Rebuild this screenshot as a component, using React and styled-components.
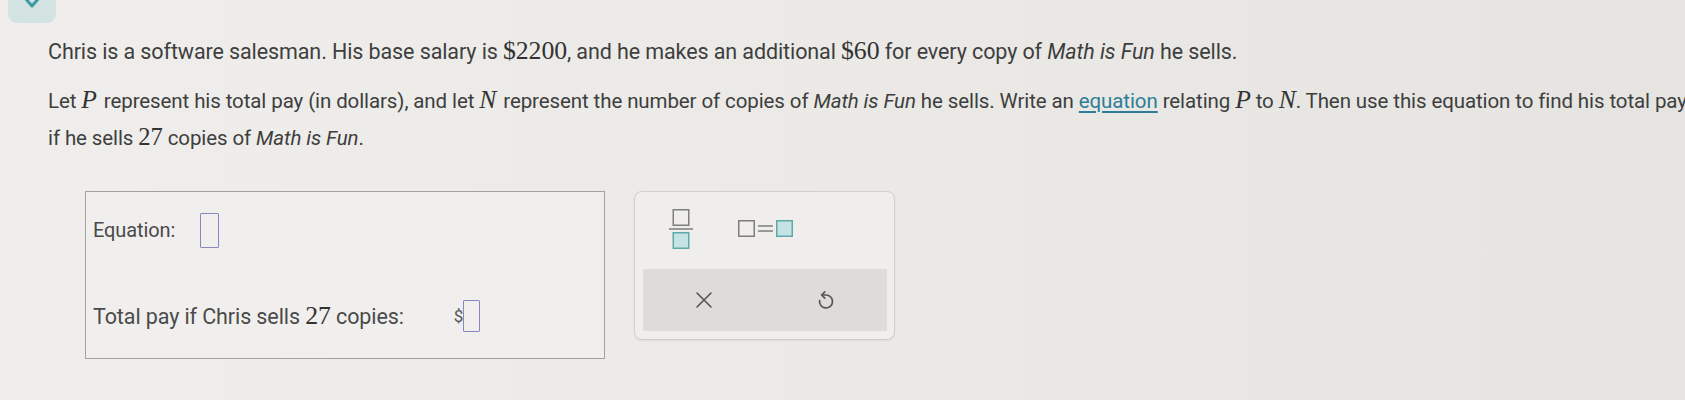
import React from "react";
import styled, { createGlobalStyle } from "styled-components";

const Global = createGlobalStyle`
  html, body { margin: 0; padding: 0; }
  body {
    width: 1685px;
    height: 400px;
    overflow: hidden;
    background: linear-gradient(90deg, #efeeec 0%, #ebeae7 45%, #e5e4e0 100%);
    font-family: Roboto, "Noto Sans", "Liberation Sans", sans-serif;
    color: #3e3e3e;
  }
`;

const Page = styled.div`
  display: flex;
  flex-direction: column;
`;

const Header = styled.div`
  height: 23px;
  padding-left: 8px;
  display: flex;
`;

const TabButton = styled.div`
  width: 48px;
  height: 23px;
  border-radius: 0 0 9px 9px;
  background: #d3e3e2;
  display: flex;
  justify-content: center;
  align-items: flex-start;
  overflow: hidden;
`;

const Content = styled.div`
  padding: 10px 0 0 48px;
  display: flex;
  flex-direction: column;
`;

const Para = styled.p`
  margin: ${(p) => (p.$first ? "0" : "13px 0 0")};
  font-size: ${(p) => p.$size}px;
  line-height: 35px;
  letter-spacing: -0.1px;
  white-space: nowrap;
`;

const MathNum = styled.span`
  font-family: "Liberation Serif", "DejaVu Serif", serif;
  font-size: 1.2em;
  color: #333;
`;

const MathVar = styled.span`
  font-family: "Liberation Serif", "DejaVu Serif", serif;
  font-style: italic;
  font-size: 1.25em;
  color: #333;
  margin-right: ${(p) => p.$mr || "0"};
`;

const Title = styled.i`
  font-style: italic;
`;

const Link = styled.span`
  color: #2f7d98;
  text-decoration: underline;
  text-underline-offset: 3px;
`;

const WorkArea = styled.div`
  margin: 35px 0 0 37px;
  display: flex;
  align-items: flex-start;
  gap: 29px;
`;

const AnswerBox = styled.div`
  box-sizing: border-box;
  width: 520px;
  height: 168px;
  border: 1px solid #a2a2a0;
  background: #f0efed;
  padding: 20px 7px 0;
  display: flex;
  flex-direction: column;
  gap: 50px;
`;

const AnswerRow = styled.div`
  display: flex;
  align-items: center;
  height: 36px;
  font-size: ${(p) => p.$size}px;
  letter-spacing: -0.1px;
  color: #4a4a4a;
`;

const Dollar = styled.span`
  margin-left: 50px;
  font-size: 17px;
  color: #555;
`;

const InputSlot = styled.span`
  box-sizing: border-box;
  display: inline-block;
  width: ${(p) => p.$w || 19}px;
  height: ${(p) => p.$h || 34}px;
  border: 1.5px solid #8a86c0;
  border-radius: 1px;
  margin-left: ${(p) => p.$ml || 0}px;
`;

const Keypad = styled.div`
  box-sizing: border-box;
  width: 261px;
  height: 149px;
  border: 1px solid #cfcfcd;
  border-radius: 8px;
  background: #efeeec;
  box-shadow: 0 1px 2px rgba(0, 0, 0, 0.06);
  display: flex;
  flex-direction: column;
`;

const KeyRow = styled.div`
  box-sizing: border-box;
  height: 78px;
  padding: 0 0 4px 4px;
  display: grid;
  grid-template-columns: 84px 84px 84px;
  align-items: center;
`;

const KeyCell = styled.div`
  display: flex;
  justify-content: center;
  align-items: center;
`;

const ActionBar = styled.div`
  margin: 0 7px 8px 8px;
  height: 62px;
  background: #dddcda;
  border-radius: 2px;
  display: grid;
  grid-template-columns: 1fr 1fr;
  align-items: center;
`;

const ActionButton = styled.div`
  display: flex;
  justify-content: center;
  align-items: center;
`;

const Chevron = () => (
  <svg width="20" height="12" viewBox="0 0 20 12">
    <path d="M3 -2 L10 6 L17 -2" fill="none" stroke="#3d9ba6" strokeWidth="3" strokeLinecap="round" strokeLinejoin="round" />
  </svg>
);

const FractionIcon = () => (
  <svg width="26" height="42" viewBox="0 0 26 42">
    <rect x="5.25" y="1.75" width="15.5" height="15.5" fill="none" stroke="#7e7e7e" strokeWidth="1.5" />
    <line x1="1" y1="21" x2="25" y2="21" stroke="#7e7e7e" strokeWidth="1.5" />
    <rect x="5.25" y="24.75" width="15.5" height="15.5" fill="#c3e4e3" stroke="#5fa9aa" strokeWidth="1.5" />
  </svg>
);

const EqualsIcon = () => (
  <svg width="57" height="19" viewBox="0 0 57 19">
    <rect x="1.75" y="1.75" width="15.5" height="15.5" fill="none" stroke="#7e7e7e" strokeWidth="1.5" />
    <line x1="21" y1="7" x2="36" y2="7" stroke="#7e7e7e" strokeWidth="1.5" />
    <line x1="21" y1="12" x2="36" y2="12" stroke="#7e7e7e" strokeWidth="1.5" />
    <rect x="39.75" y="1.75" width="15.5" height="15.5" fill="#c3e4e3" stroke="#5fa9aa" strokeWidth="1.5" />
  </svg>
);

const CrossIcon = () => (
  <svg width="18" height="18" viewBox="0 0 18 18">
    <path d="M2 2 L16 16 M16 2 L2 16" stroke="#555" strokeWidth="1.6" strokeLinecap="round" />
  </svg>
);

const UndoIcon = () => (
  <svg width="20" height="22" viewBox="0 0 20 22">
    <path d="M6 6 H10 A6.5 6.5 0 1 1 3.6 11.5" fill="none" stroke="#555" strokeWidth="1.7" strokeLinecap="round" />
    <path d="M8.8 2.8 L5.6 6 L8.8 9.2" fill="none" stroke="#555" strokeWidth="1.7" strokeLinecap="round" strokeLinejoin="round" />
  </svg>
);

export default function App() {
  return (
    <>
      <Global />
      <Page>
        <Header>
          <TabButton>
            <Chevron />
          </TabButton>
        </Header>
        <Content>
          <Para $first $size={21.5}>
            Chris is a software salesman. His base salary is <MathNum>$2200</MathNum>, and he makes an additional{" "}
            <MathNum>$60</MathNum> for every copy of <Title>Math is Fun</Title> he sells.
          </Para>
          <Para $size={20.5}>
            Let <MathVar $mr="2px">P</MathVar> represent his total pay (in dollars), and let <MathVar $mr="2px">N</MathVar>{" "}
            represent the number of copies of <Title>Math is Fun</Title> he sells. Write an <Link>equation</Link> relating{" "}
            <MathVar>P</MathVar> to <MathVar>N</MathVar>. Then use this equation to find his total pay
            <br />
            if he sells <MathNum>27</MathNum> copies of <Title>Math is Fun</Title>.
          </Para>
          <WorkArea>
            <AnswerBox>
              <AnswerRow $size={20}>
                Equation:
                <InputSlot $ml={25} $w={19} $h={35} />
              </AnswerRow>
              <AnswerRow $size={21.5}>
                Total pay if Chris sells&nbsp;<MathNum>27</MathNum>&nbsp;copies:
                <Dollar>$</Dollar>
                <InputSlot $w={17} $h={32} />
              </AnswerRow>
            </AnswerBox>
            <Keypad>
              <KeyRow>
                <KeyCell>
                  <FractionIcon />
                </KeyCell>
                <KeyCell>
                  <EqualsIcon />
                </KeyCell>
              </KeyRow>
              <ActionBar>
                <ActionButton>
                  <CrossIcon />
                </ActionButton>
                <ActionButton>
                  <UndoIcon />
                </ActionButton>
              </ActionBar>
            </Keypad>
          </WorkArea>
        </Content>
      </Page>
    </>
  );
}
